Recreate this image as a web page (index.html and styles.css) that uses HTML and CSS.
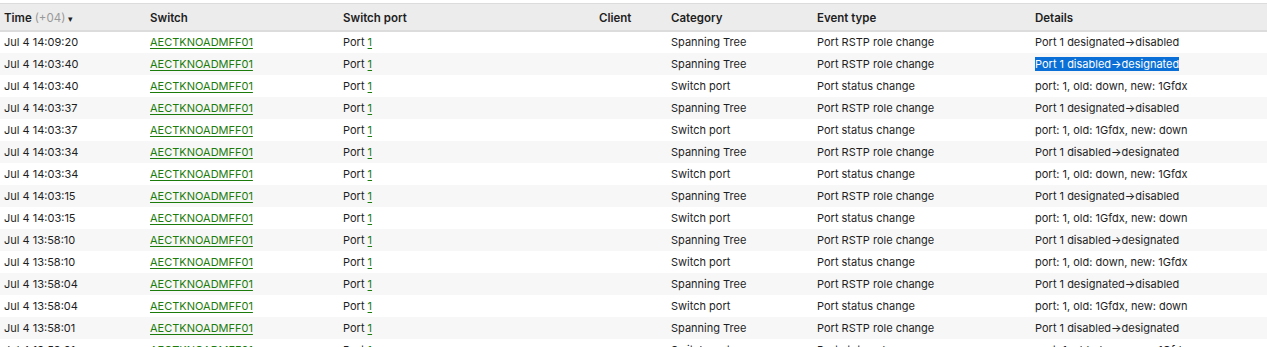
FILE: index.html
```html
<!DOCTYPE html>
<html lang="en">
<head>
    <meta charset="UTF-8">
    <title>Event log</title>
    <link rel="stylesheet" href="styles.css">
</head>
<body>
    <div class="log">
        <table class="events">
            <colgroup>
                <col class="c-time">
                <col class="c-switch">
                <col class="c-port">
                <col class="c-client">
                <col class="c-cat">
                <col class="c-type">
                <col class="c-details">
            </colgroup>
            <thead>
                <tr>
                    <th>Time <span class="tz">(+04)</span> <span class="sort">&#9662;</span></th>
                    <th>Switch</th>
                    <th>Switch port</th>
                    <th class="client">Client</th>
                    <th>Category</th>
                    <th>Event type</th>
                    <th>Details</th>
                </tr>
            </thead>
            <tbody>
                <tr><td>Jul 4 14:09:20</td><td><a href="#">AECTKNOADMFF01</a></td><td>Port <a href="#">1</a></td><td></td><td>Spanning Tree</td><td>Port RSTP role change</td><td>Port 1 designated&rarr;disabled</td></tr>
                <tr><td>Jul 4 14:03:40</td><td><a href="#">AECTKNOADMFF01</a></td><td>Port <a href="#">1</a></td><td></td><td>Spanning Tree</td><td>Port RSTP role change</td><td><span class="selected">Port 1 disabled&rarr;designated</span></td></tr>
                <tr><td>Jul 4 14:03:40</td><td><a href="#">AECTKNOADMFF01</a></td><td>Port <a href="#">1</a></td><td></td><td>Switch port</td><td>Port status change</td><td>port: 1, old: down, new: 1Gfdx</td></tr>
                <tr><td>Jul 4 14:03:37</td><td><a href="#">AECTKNOADMFF01</a></td><td>Port <a href="#">1</a></td><td></td><td>Spanning Tree</td><td>Port RSTP role change</td><td>Port 1 designated&rarr;disabled</td></tr>
                <tr><td>Jul 4 14:03:37</td><td><a href="#">AECTKNOADMFF01</a></td><td>Port <a href="#">1</a></td><td></td><td>Switch port</td><td>Port status change</td><td>port: 1, old: 1Gfdx, new: down</td></tr>
                <tr><td>Jul 4 14:03:34</td><td><a href="#">AECTKNOADMFF01</a></td><td>Port <a href="#">1</a></td><td></td><td>Spanning Tree</td><td>Port RSTP role change</td><td>Port 1 disabled&rarr;designated</td></tr>
                <tr><td>Jul 4 14:03:34</td><td><a href="#">AECTKNOADMFF01</a></td><td>Port <a href="#">1</a></td><td></td><td>Switch port</td><td>Port status change</td><td>port: 1, old: down, new: 1Gfdx</td></tr>
                <tr><td>Jul 4 14:03:15</td><td><a href="#">AECTKNOADMFF01</a></td><td>Port <a href="#">1</a></td><td></td><td>Spanning Tree</td><td>Port RSTP role change</td><td>Port 1 designated&rarr;disabled</td></tr>
                <tr><td>Jul 4 14:03:15</td><td><a href="#">AECTKNOADMFF01</a></td><td>Port <a href="#">1</a></td><td></td><td>Switch port</td><td>Port status change</td><td>port: 1, old: 1Gfdx, new: down</td></tr>
                <tr><td>Jul 4 13:58:10</td><td><a href="#">AECTKNOADMFF01</a></td><td>Port <a href="#">1</a></td><td></td><td>Spanning Tree</td><td>Port RSTP role change</td><td>Port 1 disabled&rarr;designated</td></tr>
                <tr><td>Jul 4 13:58:10</td><td><a href="#">AECTKNOADMFF01</a></td><td>Port <a href="#">1</a></td><td></td><td>Switch port</td><td>Port status change</td><td>port: 1, old: down, new: 1Gfdx</td></tr>
                <tr><td>Jul 4 13:58:04</td><td><a href="#">AECTKNOADMFF01</a></td><td>Port <a href="#">1</a></td><td></td><td>Spanning Tree</td><td>Port RSTP role change</td><td>Port 1 designated&rarr;disabled</td></tr>
                <tr><td>Jul 4 13:58:04</td><td><a href="#">AECTKNOADMFF01</a></td><td>Port <a href="#">1</a></td><td></td><td>Switch port</td><td>Port status change</td><td>port: 1, old: 1Gfdx, new: down</td></tr>
                <tr><td>Jul 4 13:58:01</td><td><a href="#">AECTKNOADMFF01</a></td><td>Port <a href="#">1</a></td><td></td><td>Spanning Tree</td><td>Port RSTP role change</td><td>Port 1 disabled&rarr;designated</td></tr>
                <tr><td>Jul 4 13:58:01</td><td><a href="#">AECTKNOADMFF01</a></td><td>Port <a href="#">1</a></td><td></td><td>Switch port</td><td>Port status change</td><td>port: 1, old: down, new: 1Gfdx</td></tr>
            </tbody>
        </table>
    </div>
</body>
</html>
```

FILE: styles.css
```css
:root {
    --text-color: #1e1e1e;
    --muted-color: #999;
    --link-color: #1c7c0b;
    --head-bg: #ececec;
    --stripe-bg: #f7f7f7;
    --border-color: #dcdcdc;
    --select-bg: #0a6fd6;
}

* {
    box-sizing: border-box;
    margin: 0;
    padding: 0;
}

body {
    font-family: 'Inter', 'Liberation Sans', sans-serif;
    font-size: 11px;
    color: var(--text-color);
    background: white;
    overflow: hidden;
}

.log {
    padding-top: 3px;
}

.events {
    width: 100%;
    border-collapse: collapse;
    table-layout: fixed;
}

.c-time { width: 146px; }
.c-switch { width: 193px; }
.c-port { width: 256px; }
.c-client { width: 72px; }
.c-cat { width: 146px; }
.c-type { width: 218px; }

.events thead tr {
    background: var(--head-bg);
    border-top: 1px solid var(--border-color);
    border-bottom: 2px solid var(--border-color);
}

.events th {
    height: 27px;
    padding: 2px 4px 0;
    text-align: left;
    font-size: 11.5px;
    font-weight: 600;
    white-space: nowrap;
}

.tz {
    color: var(--muted-color);
    font-weight: 400;
}

.sort {
    font-size: 9px;
    font-weight: 400;
}

.events td {
    height: 22px;
    padding: 0 4px;
    white-space: nowrap;
    overflow: hidden;
}

.events tbody tr:nth-child(even) {
    background: var(--stripe-bg);
}

.events a {
    color: var(--link-color);
    text-decoration: underline;
    text-underline-offset: 2px;
}

.selected {
    background: var(--select-bg);
    color: white;
}
```
